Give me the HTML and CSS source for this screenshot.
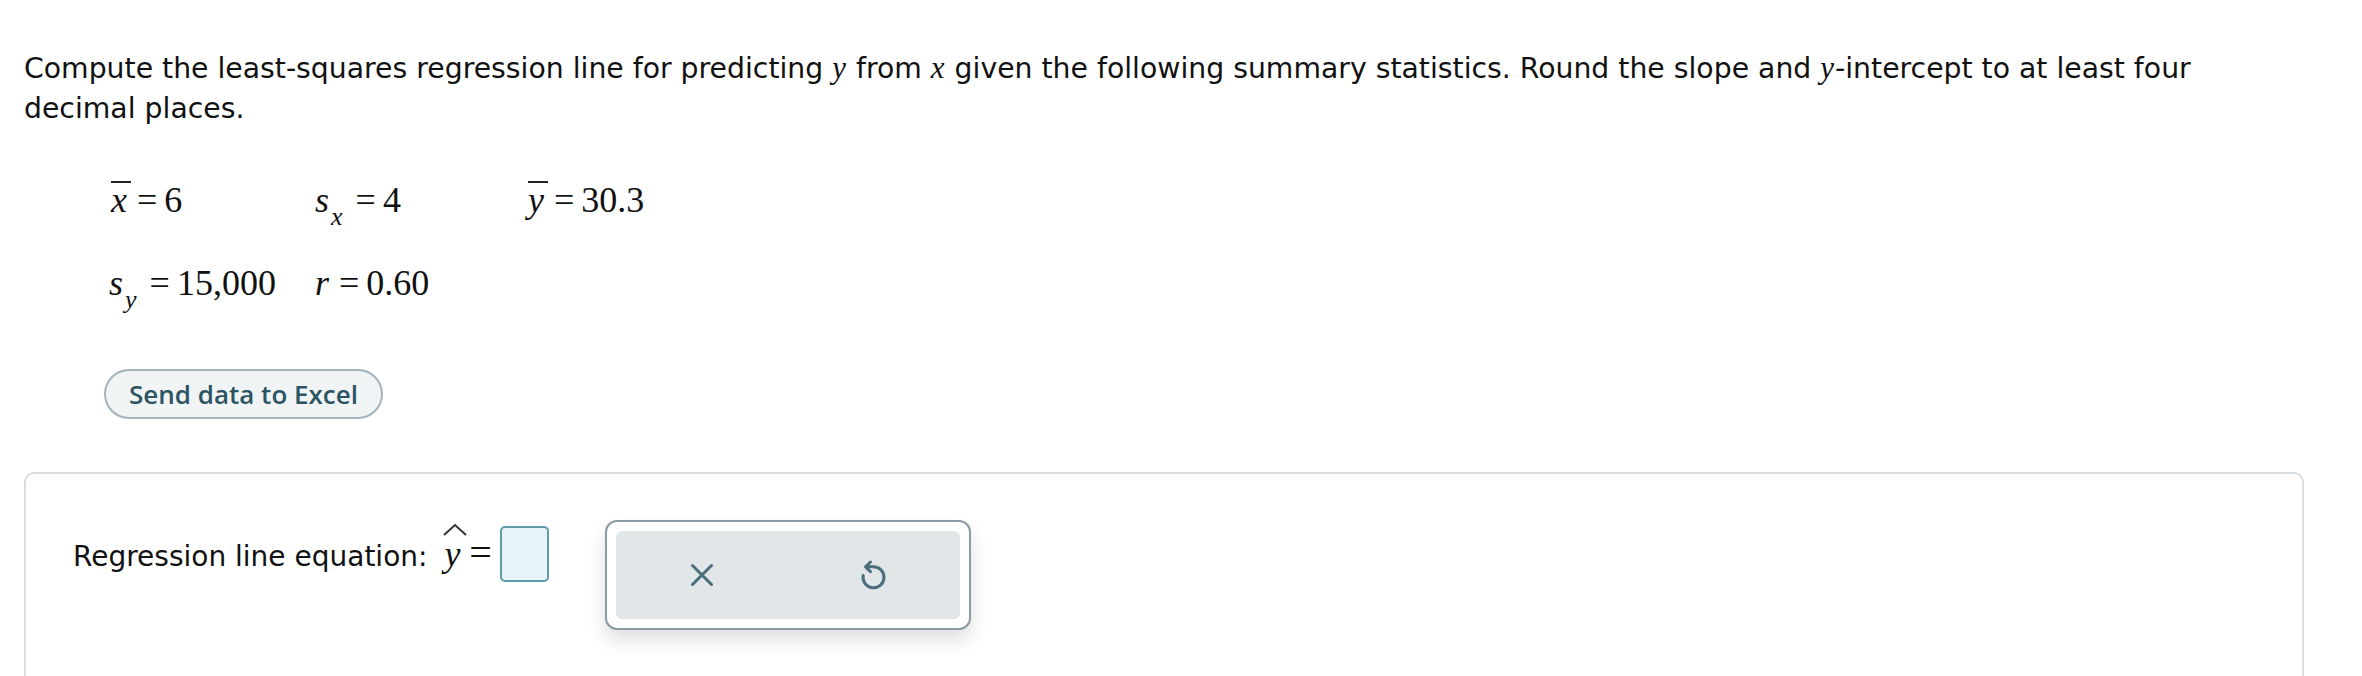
FILE: index.html
```html
<!DOCTYPE html>
<html>
<head>
<meta charset="utf-8">
<link rel="stylesheet" href="styles.css">
</head>
<body>
<div class="page">
  <p class="prompt">Compute the least-squares regression line for predicting <span class="mi">y</span> from <span class="mi">x</span> given the following summary statistics. Round the slope and <span class="mi">y</span>-intercept to at least four decimal places.</p>

  <div class="stats">
    <div class="cell"><span class="mi ov">x</span><span class="eqs">=</span>6</div>
    <div class="cell"><span class="mi">s</span><span class="mi sub">x</span><span class="eqs">=</span>4</div>
    <div class="cell"><span class="mi ov">y</span><span class="eqs">=</span>30.3</div>
    <div class="cell"><span class="mi">s</span><span class="mi sub">y</span><span class="eqs">=</span>15,000</div>
    <div class="cell"><span class="mi">r</span><span class="eqs">=</span>0.60</div>
  </div>

  <button class="excel">Send data to Excel</button>

  <div class="answer">
    <div class="eq">
      <span class="label">Regression line equation:</span>
      <span class="yhat"><svg class="hat" width="26" height="14" viewBox="0 0 26 14"><polyline points="2,12 13,2 24,12" fill="none" stroke="#333" stroke-width="2"/></svg><span class="mi">y</span></span><span class="aeq">=</span><span class="input"></span>
    </div>
    <div class="tools">
      <div class="tools-in">
        <span class="tool">
          <svg width="24" height="24" viewBox="0 0 24 24"><path d="M2.5 2.5L21.5 21.5M21.5 2.5L2.5 21.5" stroke="#4b6e7b" stroke-width="3" stroke-linecap="round" fill="none"/></svg>
        </span>
        <span class="tool">
          <svg width="30" height="32" viewBox="0 0 30 32"><path d="M14.5 7.8A10.5 10.5 0 1 1 4.16 16.5M6.5 7.8H14.5M11.5 3L6.5 7.8L11.5 12.6" stroke="#4b6e7b" stroke-width="3" stroke-linecap="round" stroke-linejoin="round" fill="none"/></svg>
        </span>
      </div>
    </div>
  </div>
</div>
</body>
</html>
```

FILE: styles.css
```css
html, body {
  margin: 0;
  padding: 0;
  background: #fff;
}
body {
  font-family: "DejaVu Sans", Verdana, sans-serif;
  color: #111;
}
.page {
  padding-left: 24px;
  width: 2280px;
}
.prompt {
  margin: 48px 0 0 0;
  font-size: 28.3px;
  line-height: 40px;
  width: 2250px;
}
.mi {
  font-family: "Liberation Serif", "Times New Roman", serif;
  font-style: italic;
}
.prompt .mi {
  font-size: 31px;
  margin-right: 1px;
}
.stats {
  margin: 30px 0 0 85px;
  display: grid;
  grid-template-columns: 206px 211px auto;
  font-family: "Liberation Serif", "Times New Roman", serif;
  font-size: 36px;
  line-height: 83px;
  color: #111;
}
.cell {
  white-space: nowrap;
}
.ov {
  position: relative;
  display: inline-block;
  margin-left: 2px;
}
.ov::before {
  content: "";
  position: absolute;
  left: 0;
  right: -4px;
  top: 22px;
  border-top: 2px solid #222;
}
.sub {
  font-size: 26px;
  vertical-align: -13px;
  line-height: 0;
  margin-left: 2px;
  margin-right: 3px;
}
.eqs {
  margin: 0 7px 0 10px;
  font-style: normal;
}
.excel {
  display: flex;
  align-items: center;
  margin: 44px 0 0 80px;
  height: 50px;
  padding: 0 23px;
  border: 2px solid #a2b3bb;
  border-radius: 25px;
  background: #f1f4f5;
  color: #2c5463;
  font-family: "Open Sans", sans-serif;
  font-weight: 600;
  font-size: 26px;
}
.answer {
  margin-top: 53px;
  border: 2px solid #d7dde0;
  border-radius: 10px;
  height: 300px;
  box-sizing: border-box;
  padding: 46px 47px;
  display: flex;
  align-items: flex-start;
}
.eq {
  margin-top: 6px;
  font-size: 28px;
  line-height: 32px;
  white-space: nowrap;
}
.yhat {
  position: relative;
  display: inline-block;
  margin-left: 8px;
  font-size: 36px;
}
.hat {
  position: absolute;
  left: -2px;
  top: -15px;
}
.aeq {
  font-family: "Liberation Serif", serif;
  font-size: 40px;
  margin: 0 8px 0 9px;
}
.input {
  display: inline-block;
  vertical-align: -16px;
  width: 49px;
  height: 56px;
  box-sizing: border-box;
  border: 2px solid #5f9aa9;
  border-radius: 5px;
  background: #e7f3f7;
}
.tools {
  margin-left: 56px;
  border: 2px solid #8a9ba4;
  border-radius: 12px;
  padding: 9px;
  background: #fff;
  box-shadow: 0 10px 18px rgba(0, 0, 0, 0.13);
}
.tools-in {
  display: flex;
  width: 344px;
  height: 88px;
  background: #e1e6e8;
  border-radius: 6px;
}
.tool {
  flex: 1;
  display: flex;
  align-items: center;
  justify-content: center;
}
```
